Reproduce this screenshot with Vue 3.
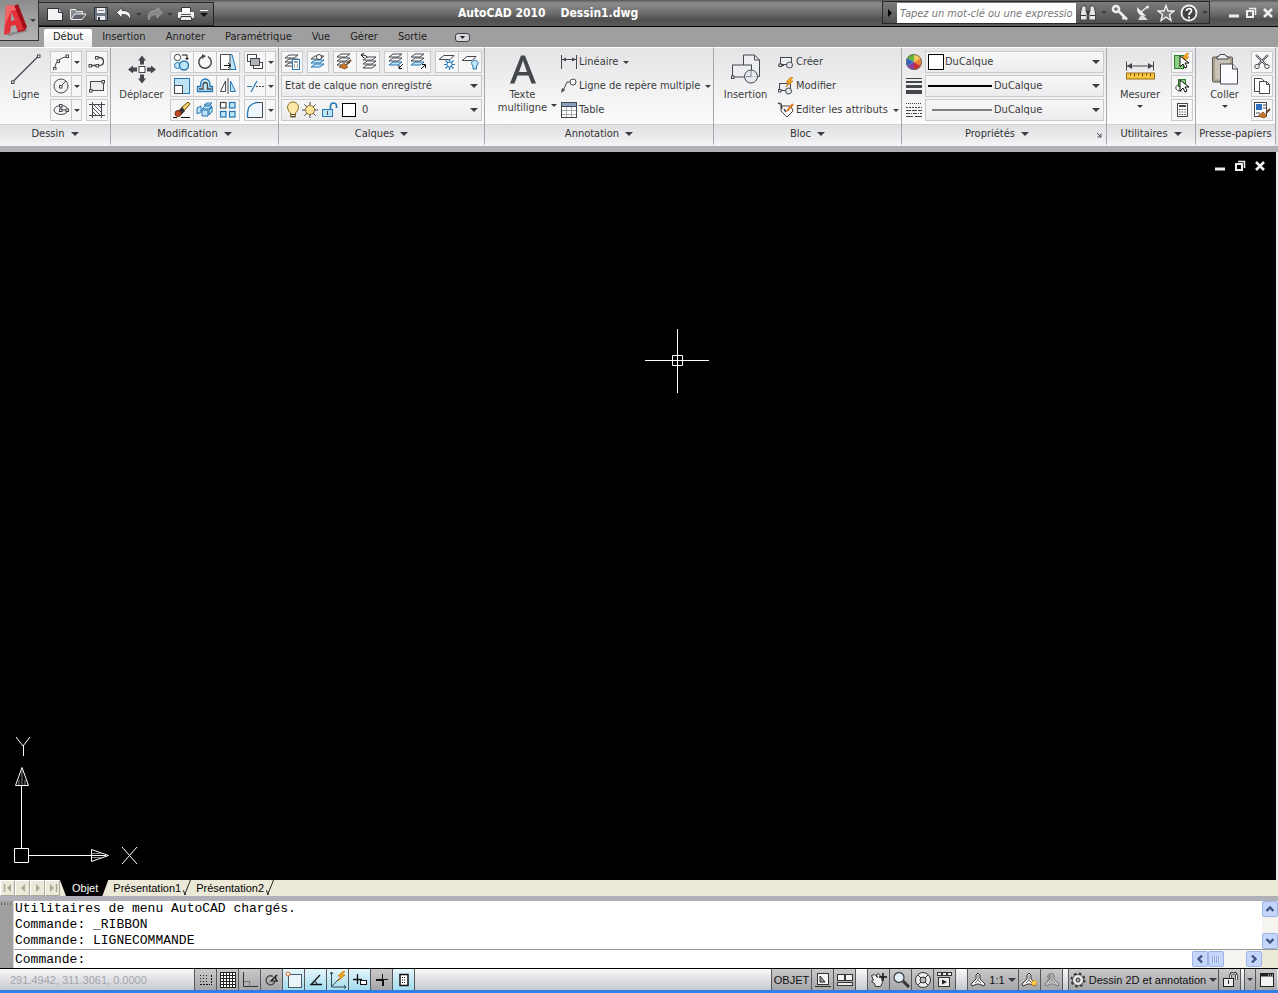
<script setup>
import { h, ref } from 'vue'

const D = '#44474c'
const B = '#2577b5'
const L = '#bfe4f6'
const node = (x, y) => `<rect x="${x - 1}" y="${y - 1}" width="2.500" height="2.500" fill="#fff" stroke="${D}"/>`
const sheet = (x, y, c = D, f = '#fff') => `<path d="M${x} ${y}h9l-4 3h-9z" fill="${f}" stroke="${c}"/>`
const stack = (x, y, c = D, f = '#fff') => sheet(x, y + 8, c, f) + sheet(x, y + 4, c, f) + sheet(x, y, D)
const brush = '<path d="M15 7l-4 4" stroke="#6b4a2a" stroke-width="2"/><path d="M8 10l4 4-3 2-6-2z" fill="#c8772a" stroke="#7b4312" stroke-width=".7"/>'
const bolt = '<path d="M14 0l-5 5h3l-3 5 7-6h-3l3-4z" fill="#ffb31a" stroke="#c96a00" stroke-width=".7"/>'
const cursor = '<path d="M7 3v11l3-3 2 4 2-1-2-4h4z" fill="#fff" stroke="#111"/>'
const figure = (c, f) => `<path d="M8 1l2 2v4l5 5-1 2-5-2H7l-5 2-1-2 5-5V3z" fill="${f}" stroke="${c}"/><path d="M8 3v5M8 8l-3 3M8 8l3 3" stroke="${c}" stroke-width=".7"/>`

// Each entry: width, height, markup
const icons = {
  line: [32, 32, `<path d="M3 28L28 3" stroke="${D}" stroke-width="1.3"/>${node(2.5, 28.5)}${node(28.5, 2.5)}`],
  move: [30, 30, `<g fill="${D}"><path d="M15 1l4 5h-2v4h-4V6h-2zM15 29l4-5h-2v-4h-4v4h-2zM1 15l5-4v2h4v4H6v2zM29 15l-5-4v2h-4v4h4v2z"/></g><rect x="12" y="12" width="6" height="6" fill="#fff" stroke="${D}"/>`],
  arc: [16, 16, `<path d="M1.5 14.5Q3 4 14.5 2.5" fill="none" stroke="${D}"/>${node(1.5, 14.5)}${node(5, 7)}${node(14, 2)}`],
  polyline: [18, 16, `<path d="M8 3.500h3c6 0 6 8 0 8H2" fill="none" stroke="${D}" stroke-width="1.3"/>${node(8.5, 3.5)}${node(9, 11.5)}${node(2, 11.5)}`],
  circle: [16, 16, `<circle cx="8" cy="8" r="7" fill="#f4f4f4" stroke="${D}"/><path d="M8 8l5-5" stroke="${D}"/>${node(7.5, 8.5)}`],
  rect: [18, 16, `<rect x="2.5" y="3.5" width="13" height="9" fill="#eee" stroke="${D}"/>${node(2.5, 12.5)}${node(15, 3.5)}`],
  ellipse: [16, 16, `<ellipse cx="8" cy="8" rx="7" ry="4.5" fill="#f4f4f4" stroke="${D}"/><path d="M8 4v4h6" fill="none" stroke="${D}"/>${node(7.5, 8)}${node(14, 8)}${node(7.5, 3.5)}`],
  hatch: [16, 16, `<path d="M3.5 0v16M12.5 0v16M0 2.5h16M0 13.5h16" stroke="${D}"/><path d="M4 10l3 3M4 6l7 7M5 3l7 7M9 3l3 3" stroke="${D}" stroke-width=".9"/>`],
  copy: [18, 18, `<circle cx="4.5" cy="4.5" r="3.2" fill="#fff" stroke="${D}"/><circle cx="4.5" cy="12.5" r="3" fill="${L}" stroke="${B}"/><circle cx="11" cy="12.5" r="4.5" fill="${L}" stroke="${B}" stroke-width="1.4"/><path d="M9 2h5v3" fill="none" stroke="#111"/><path d="M12 5h4l-2 2z" fill="#111"/>`],
  rotate: [16, 16, `<path d="M6 2.2A6.2 6.2 0 1 0 11 2.6" fill="none" stroke="${D}" stroke-width="1.5"/><path d="M5 0v5l4-3z" fill="${D}"/>`],
  stretch: [18, 18, `<path d="M9 1.500h4l4 15H9z" fill="${L}" stroke="${B}"/><path d="M11 1.500H1.500v15H11z" fill="#fff" stroke="${D}"/><path d="M5 12.500h6M9 10l3 2.500L9 15" fill="none" stroke="#111"/>`],
  scale: [18, 18, `<rect x="1.500" y="1.500" width="15" height="15" fill="${L}" stroke="${B}"/><rect x="1.500" y="8.500" width="8" height="8" fill="#fff" stroke="${D}"/>`],
  offset: [18, 18, `<path d="M2 14.500h14.500v-5h-2.500V8C14 0 4.500 0 4.500 8v1.500H1.500v5z" fill="${L}" stroke="${B}" stroke-width="1.300"/><path d="M3 12h4V8.500c0-4 4.500-4 4.500 0V12h4" fill="none" stroke="${D}" stroke-width="1.300"/>`],
  mirror: [18, 16, `<path d="M6.500 3v10.500h-5z" fill="#fff" stroke="${D}"/><path d="M11.500 3v10.500h5z" fill="${L}" stroke="${B}"/><path d="M9 0v16" stroke="${D}"/>`],
  erase: [18, 18, `<path d="M9 6l6-5 2 2-6 7z" fill="#f2cf70" stroke="#6b4a13"/><path d="M5 10l4-4 3 4-4 4z" fill="#333"/><circle cx="5" cy="12.500" r="3" fill="#bf4b25" stroke="#732a12"/><path d="M0 16.500h4M8 16.500h9" stroke="#111"/>`],
  explode: [18, 18, `<path d="M1 7l4-2v6l-4 2zM6 9h6v6H6zM6 8l3-3h7l-3 3zM13 9l3-3v5l-3 3zM8 4l3-2h5l-2 2z" fill="${L}" stroke="${B}"/>`],
  array: [18, 18, `<g fill="${L}" stroke="${B}" stroke-width="1.200"><rect x="10.500" y="1.500" width="5.500" height="5.500"/><rect x="1.500" y="10.500" width="5.500" height="5.500"/><rect x="10.500" y="10.500" width="5.500" height="5.500"/></g><rect x="1.500" y="1.500" width="5.500" height="5.500" fill="#fff" stroke="${D}" stroke-width="1.200"/>`],
  order: [18, 18, `<g fill="#fff" stroke="${D}"><rect x="1.500" y="1.500" width="9" height="7"/><rect x="7.500" y="9.500" width="9" height="6"/><rect x="4.500" y="5.500" width="9" height="7" fill="#aeb1b5"/></g>`],
  trim: [18, 16, `<path d="M1 8.500h5" stroke="${B}"/><path d="M5 14l6-11" stroke="${B}" stroke-width="1.200"/><path d="M10 8.500h8" stroke="${D}" stroke-dasharray="2 1"/>`],
  fillet: [18, 18, `<path d="M2 16V12Q3 3 11 2h5v14z" fill="#eef6fb"/><path d="M2 16.500h14.500V1.500H11" fill="none" stroke="${D}"/><path d="M1.500 17V12Q2 3 11 1.500" fill="none" stroke="${B}" stroke-width="1.300"/>`],
  layerProps: [18, 18, `${stack(6, 2)}<rect x="9.500" y="6.500" width="7" height="10" fill="#fff" stroke="${B}"/><path d="M11 9h4M11 12h1M14 12h1M11 14h1M14 14h1" stroke="${D}"/>`],
  layerMake: [18, 18, `${stack(6, 3, B, L)}<circle cx="10" cy="4" r="2.500" fill="#fff" stroke="${D}"/>`],
  layerMatch: [18, 18, stack(5, 1) + brush],
  layerPrev: [18, 18, `${stack(8, 4)}<path d="M8 4.500Q8 2 2 2M5 0L2 2l3 3" fill="none" stroke="#111"/>`],
  layerIso: [18, 18, `${sheet(6, 9, B, L)}${sheet(6, 5)}${sheet(6, 1)}<path d="M16 11l-4 4M12 12v3.500h3" fill="none" stroke="#111"/>`],
  layerUniso: [18, 18, `${sheet(5, 9, B, L)}${sheet(5, 5)}${sheet(5, 1)}<path d="M11 16l4-4M12 11.500h3.500V15" fill="none" stroke="#111"/>`],
  layerFreeze: [18, 18, `<path d="M6 2.500h10l-4 4H1z" fill="#fff" stroke="${D}"/><path d="M11.500 6v11M6 11.500h11M7.500 7.500l8 8M15.500 7.500l-8 8" stroke="${B}" stroke-width="1.200"/><circle cx="11.500" cy="11.500" r="2.500" fill="#fff" stroke="${B}"/>`],
  layerOff: [18, 18, `<path d="M6 3.500h9l-4 4H1z" fill="#fff" stroke="${D}"/><path d="M12 13c-5-5 5-9 5-2 0 1-1 1-1.500 2v3H12z" fill="${L}" stroke="${B}"/>`],
  bulb: [12, 18, `<path d="M3.500 12C-2 7 1 1 6 1s8 6 2.500 11v4h-5z" fill="#ffe9a8" stroke="#8b6c20"/><path d="M4 13.500h4M4 15.500h4" stroke="${D}"/>`],
  sun: [16, 16, `<path d="M8 0v16M0 8h16M2.300 2.300l11.400 11.400M13.700 2.300L2.300 13.700" stroke="${D}"/><circle cx="8" cy="8" r="4.500" fill="#ffe49a" stroke="#94722b"/>`],
  lock: [18, 16, `<path d="M9.500 8V4q0-3 3-3t3 3v2" fill="none" stroke="${B}" stroke-width="1.600"/><rect x="1.500" y="7.500" width="10" height="7" fill="${L}" stroke="${B}"/><path d="M6.500 9v4" stroke="${D}"/>`],
  letterA: [30, 30, `<path d="M2 29L13 1h4l11 28h-4.500l-3-8h-11l-3 8zM11 17.500h8L15 6z" fill="${D}" fill-rule="evenodd"/>`],
  dim: [18, 18, `<path d="M1.500 2v14M16.500 2v14M2 6.500h14" fill="none" stroke="${D}"/><path d="M2 6.500l4-2v4zM16 6.500l-4-2v4z" fill="${D}"/>`],
  leader: [18, 18, `<path d="M3 14L7 5h3" fill="none" stroke="${D}"/><path d="M1 16l1-5 3 2z" fill="${D}"/><circle cx="13" cy="5" r="3" fill="#fff" stroke="${D}"/>`],
  table: [18, 18, `<rect x="1.500" y="1.500" width="15" height="15" fill="#fff" stroke="${D}"/><path d="M2 2h14v3H2z" fill="#8aa0c0"/><path d="M2 5.500h14" stroke="${D}"/><path d="M2 9.500h14M2 13.500h14M6.500 6v10M11.500 6v10" stroke="#a7aaae"/>`],
  insert: [32, 32, `<path d="M13.500 13V1.500h11l5 5V23h-16z" fill="#eceef4" stroke="${D}"/><path d="M24.500 1.500v5h5" fill="none" stroke="${D}"/><rect x="2.500" y="11.500" width="19" height="12" fill="#eceef4" stroke="${D}"/>${node(2.5, 23.5)}<circle cx="21" cy="23" r="6.500" fill="#e5e8ef" fill-opacity=".85" stroke="${D}"/><path d="M21 17v6h-5" fill="none" stroke="#8c9098"/>`],
  blockCreate: [18, 18, `<rect x="3.500" y="4.500" width="11" height="7" fill="#eceef4" stroke="${D}"/><path d="M1 12.500h6" stroke="${D}"/>${node(3, 12)}<circle cx="12.500" cy="12" r="3" fill="#e5e8ef" stroke="${D}"/>`],
  blockEdit: [18, 18, `<rect x="2.500" y="6.500" width="11" height="7" fill="#eceef4" stroke="${D}"/>${node(2.5, 13.5)}<circle cx="11.500" cy="14" r="3" fill="#e5e8ef" stroke="${D}"/>${bolt}`],
  attrEdit: [18, 18, `<path d="M4 5h10l2 5-6 6-6-6z" fill="#fff" stroke="${D}"/><path d="M1 2l3 1 1 5" fill="none" stroke="${D}" stroke-width="1.500"/><path d="M7 8l2 3" stroke="${D}" stroke-width="1.500"/><path d="M10 10l6-7" stroke="#e27d22" stroke-width="2.200"/>`],
  wheel: [16, 16, '<path d="M8 8V0a8 8 0 0 1 7 4z" fill="#f4c860"/><path d="M8 8l7-4a8 8 0 0 1 0 8z" fill="#ee8330"/><path d="M8 8l7 4a8 8 0 0 1-7 4z" fill="#cc2e35"/><path d="M8 8v8a8 8 0 0 1-7-4z" fill="#8b3ea0"/><path d="M8 8l-7 4a8 8 0 0 1 0-8z" fill="#2f62c4"/><path d="M8 8L1 4a8 8 0 0 1 7-4z" fill="#62b63c"/><circle cx="8" cy="8" r="7.500" fill="none" stroke="#6b6e73"/>'],
  weights: [16, 18, `<path d="M0 1.500h16" stroke="${D}"/><path d="M0 5h16" stroke="${D}" stroke-width="2"/><path d="M0 9.500h16" stroke="${D}" stroke-width="3"/><path d="M0 15h16" stroke="${D}" stroke-width="4"/>`],
  linetypes: [16, 16, `<g stroke="${D}"><path d="M0 1.500h16" stroke-dasharray="1 1"/><path d="M0 5.500h16" stroke-dasharray="2 1"/><path d="M0 8.500h16" stroke-dasharray="5 1"/><path d="M0 11.500h16" stroke-dasharray="4 1 1 1"/><path d="M0 14.500h16" stroke-dasharray="7 2"/></g>`],
  measure: [32, 32, `<path d="M2.500 8v9M29.500 8v9M3 12.500h26" stroke="${D}"/><path d="M3 12.500l5-3v6zM29 12.500l-5-3v6z" fill="${D}"/><rect x="2.500" y="19.500" width="28" height="6" fill="#f8c63f" stroke="#9b6d10"/><path d="M6.500 20v2M10.500 20v3M14.500 20v2M18.500 20v3M22.500 20v2M26.500 20v3" stroke="#6d4c08"/>`],
  quickSelect: [18, 18, `<rect x="1.500" y="2.500" width="9" height="13" fill="#8fd183" stroke="#2c7a2c"/>${bolt}${cursor}`],
  selectAll: [18, 18, `<path d="M8 7C2 7 1 13 6 14h3" fill="none" stroke="${D}"/><rect x="5.500" y="2.500" width="7" height="7" fill="#8fd183" stroke="#2c7a2c"/>${cursor}`],
  calc: [18, 18, `<rect x="4.500" y="2.500" width="10" height="13" fill="#fff" stroke="${D}"/><rect x="6" y="4" width="7" height="2" fill="${D}"/><path d="M6 8.500h7M6 11h7M6 13.500h7" stroke="${D}" stroke-dasharray="1.500 1.200"/>`],
  paste: [32, 32, `<rect x="3.500" y="3.500" width="20" height="25" rx="1" fill="#aa9f90" stroke="#5f584e"/><rect x="6" y="6" width="15" height="20" fill="#c9c2b6"/><path d="M8 5.500V3q3 0 3-2h5q0 2 3 2v2.500z" fill="#eceef1" stroke="${D}"/><path d="M11.500 10.500h12l5 5v15h-17z" fill="#fafbfe" stroke="${D}"/><path d="M23.500 10.500v5h5" fill="#dfe2ea" stroke="${D}"/>`],
  cut: [18, 18, `<path d="M3 2l10 10M15 2L5 12" stroke="${D}" stroke-width="2"/><path d="M3 2l10 10M15 2L5 12" stroke="#fff" stroke-width=".6"/><ellipse cx="4" cy="13.500" rx="2.300" ry="2" fill="#fff" stroke="${D}"/><ellipse cx="14" cy="13.500" rx="2.300" ry="2" fill="#fff" stroke="${D}"/>`],
  copyClip: [18, 18, `<path d="M1.500 1.500h7l3 3v10h-10z" fill="#fff" stroke="${D}"/><path d="M6.500 4.500h7l3 3v9h-10z" fill="#fff" stroke="${D}"/><path d="M13.500 4.500v3h3" fill="none" stroke="${D}"/>`],
  matchProps: [18, 18, `<rect x="1.500" y="1.500" width="12" height="14" fill="#fff" stroke="${D}"/><rect x="3" y="3" width="6" height="6" fill="#2a6fbd"/><path d="M10 4h3M10 7h3M3 12h4" stroke="${D}"/><g transform="translate(2 1)">${brush}</g>`],
  launcher: [6, 6, `<path d="M1 1l4 4M5 1.500V5H1.500" fill="none" stroke="${D}"/>`],
  newFile: [18, 16, '<path d="M1.500 2.500h11l4 4v8h-15z" fill="#f4f4f4" stroke="#2e3238"/><path d="M12.500 2.500v4h4" fill="#b9bcc1" stroke="#2e3238"/>'],
  open: [18, 16, '<path d="M1.500 13V3.500h5l1 2h6v3" fill="#8a8e94" stroke="#ececec"/><path d="M2 13.500l4-5.500h11l-4 5.500z" fill="#5f646c" stroke="#eee"/>'],
  save: [16, 16, '<path d="M1.500 1.500h13v13h-13z" fill="#6f7886" stroke="#2b3038"/><rect x="4" y="2" width="8" height="5" fill="#f1f1f1"/><path d="M5 4.500h6" stroke="#888"/><rect x="4" y="10" width="8" height="4" fill="#eceff3"/><rect x="5" y="11" width="2" height="3" fill="#333"/>'],
  undo: [18, 16, '<path d="M1.500 6.500L7 1.500v3c7 0 10 3 8 9.500-1-4-3-5.500-8-5.500v3.500z" fill="#f5f5f5" stroke="#33363b" stroke-width=".800"/>'],
  redo: [18, 16, '<path d="M16.500 6.500L11 1.500v3c-7 0-10 3-8 9.500 1-4 3-5.500 8-5.500v3.500z" fill="#868686" stroke="#aaa" stroke-width=".800"/>'],
  print: [18, 16, '<path d="M4.500 1.500h9v5h-9z" fill="#fff" stroke="#333"/><rect x="1" y="6" width="16" height="6" rx="1" fill="#f3f3f3"/><path d="M4 8.500h10" stroke="#555"/><path d="M4 10.500h10l1 4H3z" fill="#eee" stroke="#333"/>'],
  qatMore: [8, 8, '<path d="M0 .5h8" stroke="#fff"/><path d="M0 3h8L4 7z" fill="#111"/>'],
  find: [18, 16, '<g fill="#e6e6e6" stroke="#2d2d2d" stroke-width=".800"><path d="M3 1h4v5l1 2v7H1.500V8zM15 1h-4v5l-1 2v7h6.500V8z"/></g><path d="M8 6h2v3H8zM2 10h5v1H2zM11 10h5v1h-5z" fill="#333"/>'],
  key: [18, 18, '<circle cx="5" cy="5" r="3" fill="none" stroke="#ededed" stroke-width="2.600"/><path d="M7.500 7l8.500 8.500M13.500 13l-2 2" stroke="#ededed" stroke-width="2.600"/>'],
  dish: [18, 18, '<path d="M3 3q-1 9 9 9z" fill="#f2f2f2"/><path d="M7 8l6-5" stroke="#eee" stroke-width="1.500"/><circle cx="13.500" cy="3" r="1.500" fill="#eee"/><path d="M7 11l-3 5h10l-4-4z" fill="#ddd"/>'],
  star: [18, 18, '<path d="M9 1.500l2 5.500h6l-4.500 3.500 1.500 6L9 13l-5 3.500 1.500-6L1 7h6z" fill="#777" stroke="#f4f4f4" stroke-width="1.300"/>'],
  help: [18, 18, '<circle cx="9" cy="9" r="7.500" fill="#444" stroke="#f2f2f2" stroke-width="1.800"/><path d="M6.500 7c0-3.500 5.500-3 5 0-.3 1.500-2.500 1.700-2.500 4M9 12.500v2" fill="none" stroke="#fff" stroke-width="1.800"/>'],
  min: [12, 12, '<path d="M1 9h10" stroke="#eee" stroke-width="3"/>'],
  restore: [12, 12, '<path d="M4 1.500h6.500V8" fill="none" stroke="#eee" stroke-width="1.500"/><rect x="2" y="4" width="6" height="6" fill="none" stroke="#eee" stroke-width="2"/>'],
  close: [12, 12, '<path d="M2 2l8 8M10 2l-8 8" stroke="#eee" stroke-width="2.600"/>'],
  more: [16, 9, '<rect x=".5" y=".5" width="14" height="8" rx="2.500" fill="#d5d7dc" stroke="#3c4044"/><path d="M5 3h5L7.500 6z" fill="#222"/>'],
  first: [12, 12, '<path d="M2.500 2v8" stroke="#aca899" stroke-width="1.500"/><path d="M9 2L5 6l4 4z" fill="#aca899"/>'],
  prev: [12, 12, '<path d="M8 2L4 6l4 4z" fill="#aca899"/>'],
  next: [12, 12, '<path d="M4 2l4 4-4 4z" fill="#aca899"/>'],
  last: [12, 12, '<path d="M9.500 2v8" stroke="#aca899" stroke-width="1.500"/><path d="M3 2l4 4-4 4z" fill="#aca899"/>'],
  snap: [16, 16, '<g stroke="#222" stroke-dasharray="1 2"><path d="M2 3.500h9M2 6.500h9M2 9.500h9"/></g><path d="M2 12.500h10M13.500 3v10" stroke="#111" stroke-dasharray="2 1"/>'],
  grid: [16, 16, '<rect width="16" height="16" fill="#fff"/><path d="M.5 0v16M3.500 0v16M6.500 0v16M9.500 0v16M12.500 0v16M15.500 0v16M0 .5h16M0 3.500h16M0 6.500h16M0 9.500h16M0 12.500h16M0 15.500h16" stroke="#222"/>'],
  ortho: [16, 16, '<path d="M1.500 0v14.500H16" fill="none" stroke="#333"/><path d="M2 9.500h5.500v5" fill="none" stroke="#777"/>'],
  polar: [16, 16, '<path d="M9 4.500A4.500 4.500 0 1 0 11 9" fill="none" stroke="#444" stroke-width="1.300"/><path d="M13 3L7 9h7M11 4.500l2 5" fill="none" stroke="#111" stroke-width="1.200"/>'],
  osnap: [18, 18, '<rect x="3.500" y="3.500" width="13" height="13" fill="#e9f5fb" stroke="#4b5a64"/><circle cx="3" cy="3" r="2" fill="#fff" stroke="#e36224"/>'],
  track: [16, 16, '<path d="M12 3L3 12.500h11" fill="none" stroke="#111" stroke-width="1.300"/><path d="M6 9.500q3 0 3 3" stroke="#111" fill="none"/>'],
  ducs: [18, 18, `<path d="M2.500 1v15H17M3 15L12 6M1 3l1.500-2L4 3M15 14l2 2-2 1.500" fill="none" stroke="#33484f"/>${bolt}`],
  dyn: [16, 16, '<path d="M5.500 2v10M1 7.500h9" stroke="#111" stroke-width="1.300"/><rect x="8.500" y="8.500" width="6" height="4" fill="#fff" stroke="#111"/>'],
  lwt: [16, 16, '<path d="M8.500 2v12M8 7.500h6" stroke="#111"/><path d="M2 8h7v6" fill="none" stroke="#111" stroke-width="2"/>'],
  quickProps: [14, 14, '<rect x="3" y="1.500" width="8" height="11" fill="#fff" stroke="#111" stroke-width="1.500"/><path d="M5 4.500h4M5 7h4M5 9.500h4" stroke="#111" stroke-dasharray="1 1"/>'],
  model: [18, 18, '<rect x="3.500" y="2.500" width="11" height="11" fill="#f5f5f5" stroke="#333"/><path d="M6 5v6h5z" fill="#aaa" stroke="#222"/><path d="M1 15.500h16" stroke="#333"/>'],
  views: [18, 18, '<rect x="1.500" y="3.500" width="7" height="6" fill="#f5f5f5" stroke="#333"/><rect x="9.500" y="3.500" width="7" height="6" fill="#f5f5f5" stroke="#333"/><rect x="1.500" y="11.500" width="15" height="3" fill="#eee" stroke="#333"/>'],
  pan: [18, 18, '<path d="M1.500 4.500l3-1 3 3-1-3 2-1 3 4 1 5-2 4H5.500l-1-3-3-2 2-1z" fill="#eee" stroke="#333"/><path d="M13 2v8M9 6h8" stroke="#111" stroke-width="1.500"/>'],
  zoom: [18, 18, '<path d="M11 10l6 6" stroke="#333" stroke-width="3"/><circle cx="7" cy="6.500" r="5" fill="#dff0f7" stroke="#444" stroke-width="1.300"/>'],
  steer: [18, 18, '<circle cx="9" cy="9" r="7.500" fill="#eee" stroke="#333"/><circle cx="9" cy="9" r="3" fill="#bbb" stroke="#333"/><path d="M4 4l3 3M14 4l-3 3M4 14l3-3M14 14l-3-3" stroke="#333"/>'],
  motion: [18, 18, '<g fill="#eee" stroke="#333"><rect x="1.500" y="1.500" width="4" height="3"/><rect x="6.500" y="1.500" width="4" height="3"/><rect x="11.500" y="1.500" width="4" height="3"/><rect x="2.500" y="6.500" width="11" height="9"/></g><path d="M6 8.500l5 2.500-5 2.500z" fill="#222"/>'],
  scaleFig: [16, 16, figure('#333', '#f1f1f1')],
  scaleVis: [18, 16, figure('#333', '#f1f1f1') + '<circle cx="13" cy="11" r="2.500" fill="#ffca4a" stroke="#e07f13" stroke-dasharray="1 1"/>'],
  scaleAuto: [16, 16, figure('#777', '#c4c4c4') + '<path d="M6 1L3 5h3L3 9" fill="none" stroke="#777"/>'],
  gear: [16, 16, '<circle cx="8" cy="8" r="6.500" fill="none" stroke="#333" stroke-width="2" stroke-dasharray="2.600 2.500"/><circle cx="8" cy="8" r="5.500" fill="#e9e9e9" stroke="#333" stroke-width=".800"/><circle cx="8" cy="8" r="2" fill="#aaa" stroke="#333"/>'],
  unlock: [18, 16, '<path d="M9.500 8V4q0-3 3-3t3 3v4" fill="none" stroke="#222" stroke-width="2.400"/><path d="M9.500 8V4q0-3 3-3t3 3v4" fill="none" stroke="#eee"/><rect x="2.500" y="6.500" width="10" height="8" fill="#eee" stroke="#222"/><path d="M7.500 8v4" stroke="#222"/>'],
  clean: [16, 16, '<rect x="1.500" y="1.500" width="13" height="13" fill="#f2f2f2" stroke="#222"/><path d="M1 3h14" stroke="#222" stroke-width="3"/><path d="M9 3h5" stroke="#fff" stroke-dasharray="1 1"/>'],
  up: [12, 12, '<path d="M2.500 8L6 4.500 9.500 8" fill="none" stroke="#3c5585" stroke-width="2.400"/>'],
  down: [12, 12, '<path d="M2.500 4L6 7.500 9.500 4" fill="none" stroke="#3c5585" stroke-width="2.400"/>'],
  left: [12, 12, '<path d="M8 2.500L4.500 6 8 9.500" fill="none" stroke="#3c5585" stroke-width="2.400"/>'],
  right: [12, 12, '<path d="M4 2.500L7.500 6 4 9.500" fill="none" stroke="#3c5585" stroke-width="2.400"/>'],
}

const Icon = (props) => {
  const [w, ht, markup] = icons[props.name]
  return h('svg', { width: w, height: ht, viewBox: `0 0 ${w} ${ht}`, 'aria-hidden': 'true', innerHTML: markup })
}
Icon.props = ['name']

const menus = ['Début', 'Insertion', 'Annoter', 'Paramétrique', 'Vue', 'Gérer', 'Sortie']
const activeMenu = ref('Début')
const sheets = ['Objet', 'Présentation1', 'Présentation2']
const activeSheet = ref('Objet')
const log = ['Utilitaires de menu AutoCAD chargés.', 'Commande: _RIBBON', 'Commande: LIGNECOMMANDE']
const command = ref('')

const drawSplit = [['arc', 'Arc', 'polyline', 'Polyligne'], ['circle', 'Cercle', 'rect', 'Rectangle'], ['ellipse', 'Ellipse', 'hatch', 'Hachures']]
const modify = [
  ['copy', 'rotate', 'stretch', 'order'],
  ['scale', 'offset', 'mirror', 'trim'],
  ['erase', 'explode', 'array', 'fillet'],
]
const layerGroups = [['layerProps'], ['layerMake'], ['layerMatch', 'layerPrev'], ['layerIso', 'layerUniso'], ['layerFreeze', 'layerOff']]
const annotate = [['dim', 'Linéaire', true], ['leader', 'Ligne de repère multiple', true], ['table', 'Table', false]]
const block = [['blockCreate', 'Créer', false], ['blockEdit', 'Modifier', false], ['attrEdit', 'Editer les attributs', true]]
const toggles = [['snap', 0], ['grid', 0], ['ortho', 0], ['polar', 0], ['osnap', 1], ['track', 1], ['ducs', 1], ['dyn', 1], ['lwt', 0], ['quickProps', 1]]
</script>

<template>
  <div class="app">
    <header class="head">
      <button class="app-button" aria-label="Menu de l'application">
        <svg width="26" height="34" viewBox="0 0 26 34" aria-hidden="true">
          <path d="M4 31l20-5 2 2-19 5z" fill="#666" opacity=".5" />
          <path d="M12 3l4-2 9 23-3 4-6 1-2-6z" fill="#a30e17" />
          <path d="M4 3l8-1 10 25-6 1-2-6-5 1-1 7-6 2z M9 9v9l4-1z" fill="#e2313a" fill-rule="evenodd" />
          <path d="M4 3l8-1 2 5-5 1-6 14z" fill="#ff8a85" opacity=".6" />
        </svg>
        <span class="caret"></span>
      </button>
      <div class="titlebar">
        <div class="qat">
          <button aria-label="Nouveau"><Icon name="newFile" /></button>
          <button aria-label="Ouvrir"><Icon name="open" /></button>
          <button aria-label="Enregistrer"><Icon name="save" /></button>
          <button aria-label="Annuler"><Icon name="undo" /></button>
          <button class="thin" aria-label="Liste d'annulation"><span class="caret small"></span></button>
          <button aria-label="Rétablir"><Icon name="redo" /></button>
          <button class="thin" aria-label="Liste de rétablissement"><span class="caret small"></span></button>
          <button aria-label="Imprimer"><Icon name="print" /></button>
          <button class="more-tools" aria-label="Personnaliser"><Icon name="qatMore" /></button>
        </div>
        <h1 class="title"><span>AutoCAD 2010</span><span>Dessin1.dwg</span></h1>
        <div class="info">
          <button class="fold" aria-label="Réduire la recherche"></button>
          <input type="text" aria-label="Recherche" placeholder="Tapez un mot-clé ou une expressio" />
          <button aria-label="Rechercher"><Icon name="find" /></button>
          <button class="thin" aria-label="Options de recherche"><span class="caret small"></span></button>
          <button aria-label="Abonnement"><Icon name="key" /></button>
          <button aria-label="Communication"><Icon name="dish" /></button>
          <button aria-label="Favoris"><Icon name="star" /></button>
          <button aria-label="Aide"><Icon name="help" /></button>
          <button class="thin" aria-label="Options d'aide"><span class="caret small"></span></button>
        </div>
        <div class="window-buttons">
          <button aria-label="Réduire"><Icon name="min" /></button>
          <button aria-label="Restaurer"><Icon name="restore" /></button>
          <button aria-label="Fermer"><Icon name="close" /></button>
        </div>
      </div>
      <nav class="menus">
        <button v-for="m in menus" :key="m" :class="{ active: m === activeMenu }" @click="activeMenu = m">{{ m }}</button>
        <button class="ribbon-toggle" aria-label="Réduire le ruban"><Icon name="more" /></button>
      </nav>
    </header>

    <main class="ribbon">
      <section class="panel">
        <div class="body">
          <button class="big"><Icon name="line" /><span>Ligne</span></button>
          <div class="rows">
            <div v-for="r in drawSplit" :key="r[0]" class="row">
              <div class="group">
                <button :aria-label="r[1]"><Icon :name="r[0]" /></button>
                <button class="drop" :aria-label="'Options ' + r[1]"><span class="caret small"></span></button>
              </div>
              <div class="group"><button :aria-label="r[3]"><Icon :name="r[2]" /></button></div>
            </div>
          </div>
        </div>
        <button class="panel-title">Dessin<span class="caret"></span></button>
      </section>

      <section class="panel">
        <div class="body">
          <button class="big"><Icon name="move" /><span>Déplacer</span></button>
          <div class="rows">
            <div v-for="r in modify" :key="r[0]" class="row">
              <div class="group multi">
                <button v-for="n in r.slice(0, 3)" :key="n" :aria-label="n"><Icon :name="n" /></button>
              </div>
              <div class="group">
                <button :aria-label="r[3]"><Icon :name="r[3]" /></button>
                <button class="drop" :aria-label="'Options ' + r[3]"><span class="caret small"></span></button>
              </div>
            </div>
          </div>
        </div>
        <button class="panel-title">Modification<span class="caret"></span></button>
      </section>

      <section class="panel">
        <div class="body">
          <div class="rows wide">
            <div class="row spread">
              <div v-for="(g, i) in layerGroups" :key="i" class="group" :class="{ multi: g.length > 1 }">
                <button v-for="n in g" :key="n" :aria-label="n"><Icon :name="n" /></button>
              </div>
            </div>
            <div class="combo">
              <select aria-label="Etat de calque"><option>Etat de calque non enregistré</option></select>
              <span class="caret"></span>
            </div>
            <div class="combo layer">
              <div class="lead"><Icon name="bulb" /><Icon name="sun" /><Icon name="lock" /><i class="swatch"></i></div>
              <select aria-label="Calque"><option>0</option></select>
              <span class="caret"></span>
            </div>
          </div>
        </div>
        <button class="panel-title">Calques<span class="caret"></span></button>
      </section>

      <section class="panel">
        <div class="body">
          <button class="big text">
            <Icon name="letterA" /><span>Texte</span>
            <span>multiligne<span class="caret small"></span></span>
          </button>
          <div class="rows">
            <button v-for="a in annotate" :key="a[0]" class="item">
              <Icon :name="a[0]" />{{ a[1] }}<span v-if="a[2]" class="caret small"></span>
            </button>
          </div>
        </div>
        <button class="panel-title">Annotation<span class="caret"></span></button>
      </section>

      <section class="panel">
        <div class="body">
          <button class="big block"><Icon name="insert" /><span>Insertion</span></button>
          <div class="rows">
            <button v-for="a in block" :key="a[0]" class="item">
              <Icon :name="a[0]" />{{ a[1] }}<span v-if="a[2]" class="caret small"></span>
            </button>
          </div>
        </div>
        <button class="panel-title">Bloc<span class="caret"></span></button>
      </section>

      <section class="panel">
        <div class="body">
          <div class="rows wide">
            <div class="property">
              <Icon name="wheel" />
              <div class="combo color">
                <div class="lead"><i class="swatch"></i></div>
                <select aria-label="Couleur"><option>DuCalque</option></select>
                <span class="caret"></span>
              </div>
            </div>
            <div class="property">
              <Icon name="weights" />
              <div class="combo stroke">
                <div class="lead"><i class="rule"></i></div>
                <select aria-label="Epaisseur de ligne"><option>DuCalque</option></select>
                <span class="caret"></span>
              </div>
            </div>
            <div class="property">
              <Icon name="linetypes" />
              <div class="combo stroke">
                <div class="lead"><i class="rule gray"></i></div>
                <select aria-label="Type de ligne"><option>DuCalque</option></select>
                <span class="caret"></span>
              </div>
            </div>
          </div>
        </div>
        <div class="title-row">
          <button class="panel-title">Propriétés<span class="caret"></span></button>
          <button class="launch" aria-label="Palette Propriétés"><Icon name="launcher" /></button>
        </div>
      </section>

      <section class="panel">
        <div class="body">
          <button class="big"><Icon name="measure" /><span>Mesurer</span><span class="caret small"></span></button>
          <div class="rows">
            <div v-for="n in ['quickSelect', 'selectAll', 'calc']" :key="n" class="group"><button :aria-label="n"><Icon :name="n" /></button></div>
          </div>
        </div>
        <button class="panel-title">Utilitaires<span class="caret"></span></button>
      </section>

      <section class="panel">
        <div class="body">
          <button class="big"><Icon name="paste" /><span>Coller</span><span class="caret small"></span></button>
          <div class="rows">
            <div v-for="n in ['cut', 'copyClip', 'matchProps']" :key="n" class="group"><button :aria-label="n"><Icon :name="n" /></button></div>
          </div>
        </div>
        <button class="panel-title">Presse-papiers</button>
      </section>
    </main>

    <section class="drawing" aria-label="Zone de dessin">
      <div class="window-buttons doc">
        <button aria-label="Réduire le dessin"><Icon name="min" /></button>
        <button aria-label="Restaurer le dessin"><Icon name="restore" /></button>
        <button aria-label="Fermer le dessin"><Icon name="close" /></button>
      </div>
      <svg class="crosshair" width="65" height="65" viewBox="0 0 65 65" aria-hidden="true">
        <path d="M32.500 0v64M0 31.500h64M27.500 26.500h10v10h-10z" fill="none" stroke="#fff" />
      </svg>
      <svg class="ucs" width="130" height="130" viewBox="0 0 130 130" fill="none" stroke="#fff" aria-hidden="true">
        <path d="M.5 112.500h14v14h-14zM7.500 112V49M15 119.500h77" />
        <path d="M1.500 49.500h13l-6.500-18zM77.500 113.500v12l17-6z" />
        <path d="M8 34v15M5 44v5M11 44v5M78 117.500h9M78 121.500h9" stroke="#888" />
        <path d="M2 1l7 9 7-9M9.500 10v10M108 111l15 17M123 111l-15 17" />
      </svg>
    </section>

    <nav class="sheets">
      <button v-for="n in ['first', 'prev', 'next', 'last']" :key="n" class="step" :aria-label="n"><Icon :name="n" /></button>
      <button v-for="s in sheets" :key="s" class="sheet" :class="{ active: s === activeSheet }" @click="activeSheet = s">
        {{ s }}
        <svg class="slash" width="8" height="16" viewBox="0 0 8 16" aria-hidden="true"><path d="M7.500 0l-6 15M0 10l2.500 5" fill="none" stroke="#222" /></svg>
      </button>
    </nav>

    <section class="console">
      <div class="grip"></div>
      <div class="log"><div v-for="l in log" :key="l">{{ l }}</div></div>
      <div class="vscroll">
        <button aria-label="Défiler vers le haut"><Icon name="up" /></button>
        <button aria-label="Défiler vers le bas"><Icon name="down" /></button>
      </div>
      <div class="prompt"><label for="cmd">Commande:</label><input id="cmd" v-model="command" type="text" /></div>
      <div class="hscroll">
        <button aria-label="Défiler à gauche"><Icon name="left" /></button>
        <span class="thumb"></span>
        <button class="end" aria-label="Défiler à droite"><Icon name="right" /></button>
      </div>
    </section>

    <footer class="status">
      <span class="coords">291.4942, 311.3061, 0.0000</span>
      <button v-for="t in toggles" :key="t[0]" :class="{ on: t[1] }" :aria-label="t[0]"><Icon :name="t[0]" /></button>
      <span class="fill"></span>
      <button class="space">OBJET</button>
      <button aria-label="Présentation rapide"><Icon name="model" /></button>
      <button aria-label="Dessins rapides"><Icon name="views" /></button>
      <span class="gap"></span>
      <button v-for="n in ['pan', 'zoom', 'steer', 'motion']" :key="n" :aria-label="n"><Icon :name="n" /></button>
      <span class="gap"></span>
      <button class="ratio"><Icon name="scaleFig" />1:1<span class="caret"></span></button>
      <button aria-label="Visibilité des annotations"><Icon name="scaleVis" /></button>
      <button aria-label="Echelle automatique"><Icon name="scaleAuto" /></button>
      <span class="gap narrow"></span>
      <button class="workspace"><Icon name="gear" />Dessin 2D et annotation<span class="caret"></span></button>
      <button aria-label="Verrouillage"><Icon name="unlock" /></button>
      <span class="gap tiny"></span>
      <button class="tray" aria-label="Options"><span class="caret small"></span></button>
      <button aria-label="Plein écran"><Icon name="clean" /></button>
    </footer>
  </div>
</template>

<style>
body {
  margin: 0;
  background: #e9e9eb;
}
</style>

<style scoped>
.app {
  display: flex;
  flex-direction: column;
  min-height: 100vh;
  overflow: hidden;
  font: 11px/14px "DejaVu Sans Condensed", "Noto Sans", sans-serif;
  color: #3a3c40;
}
button, select, input {
  margin: 0;
  padding: 0;
  border: 0;
  border-radius: 0;
  background: none;
  font: inherit;
  color: inherit;
}
button {
  display: flex;
  align-items: center;
  justify-content: center;
}
svg { display: block; flex: none; }
.caret {
  flex: none;
  width: 0;
  height: 0;
  border: 4px solid transparent;
  border-top-color: #3a3c40;
  border-bottom: 0;
}
.caret.small { border-width: 3px; border-bottom: 0; }

.head { position: relative; background: #9f9f9f; }
.app-button {
  position: absolute;
  left: 0;
  top: 0;
  width: 39px;
  height: 41px;
  gap: 2px;
  border: 1px solid #333;
  border-left: 0;
  border-top: 0;
  background: linear-gradient(#8c8c8c, #a2a2a2 50%, #b4b4b4);
}
.app-button .caret { border-width: 3px; border-bottom: 0; }
.titlebar {
  display: flex;
  height: 26px;
  padding-left: 38px;
  border-bottom: 1px solid #000;
  background: linear-gradient(#555, #8c8c8c 3px, #6d6d6d 50%, #505050 75%, #5c5c5c);
}
.qat {
  display: flex;
  box-sizing: border-box;
  width: 176px;
  height: 24px;
  margin-top: 2px;
  padding: 0 2px 0 4px;
  border: 1px solid #262626;
  background: linear-gradient(#7c7c7c, #4b4b4b);
}
.qat button { width: 23px; }
.qat button.thin { width: 8px; }
.qat .more-tools { flex: 1; }
.title {
  display: flex;
  flex: 1;
  justify-content: center;
  gap: 15px;
  margin: 0;
  font-size: 12px;
  line-height: 26px;
  font-weight: bold;
  color: #fff;
}
.info {
  display: flex;
  box-sizing: border-box;
  width: 328px;
  height: 23px;
  margin-top: 1px;
  border: 1px solid #2a2a2a;
  background: linear-gradient(#7c7c7c, #505050);
}
.info button { width: 23px; }
.info button.thin { width: 9px; }
.info .fold { width: 14px; }
.fold::before {
  content: "";
  border: 4px solid transparent;
  border-left-color: #000;
  border-right: 0;
}
.info input {
  width: 179px;
  height: 20px;
  margin: 1px 0;
  padding: 0 3px;
  box-sizing: border-box;
  background: #fff;
  font-style: italic;
}
.info input::placeholder { color: #777; opacity: 1; }
.window-buttons { display: flex; gap: 5px; padding: 0 4px 0 18px; }
.window-buttons button { width: 12px; }
.menus { display: flex; height: 20px; padding-left: 44px; }
.menus button { padding: 0 10px; color: #222; }
.menus button.active {
  height: 18px;
  margin-top: 2px;
  padding: 0 9px 2px;
  background: linear-gradient(#fff, #eee);
  border-radius: 2px 2px 0 0;
}
.menus .ribbon-toggle { padding: 0 18px; }

.ribbon {
  display: grid;
  grid-template-columns: 111fr 168fr 206fr 229fr 188fr 205fr 89fr 80fr;
  padding-right: 2px;
  border-bottom: 6px solid #b0b1b6;
  background: #e9e9eb;
}
.panel {
  display: flex;
  flex-direction: column;
  min-width: 0;
  border-right: 1px solid #a6a7aa;
  border-bottom: 3px solid #f4f4f6;
  border-top: 1px solid #fff;
}
.body {
  display: flex;
  height: 76px;
  padding: 3px 2px 0;
  box-sizing: border-box;
  background: linear-gradient(#e4e4e6, #fcfcfd);
}
.panel-title {
  flex: 1;
  width: 100%;
  height: 19px;
  gap: 6px;
  border-top: 1px solid #d0d1d4;
  background: linear-gradient(#dfe0e2, #f1f1f3);
  color: #333;
}
.title-row {
  display: flex;
  background: linear-gradient(#dfe0e2, #f1f1f3);
}
.launch { width: 14px; border-top: 1px solid #d0d1d4; padding-top: 2px; }
.big {
  flex: 1;
  flex-direction: column;
  justify-content: flex-start;
  min-width: 0;
}
.big svg { height: 37px; }
.big .caret { margin-top: 3px; }
.big.text { flex: none; width: 71px; line-height: 13px; }
.big.text .caret { display: inline-block; margin: 0 -10px 4px 4px; }
.big.block { flex: none; width: 59px; }
.rows { display: flex; flex-direction: column; gap: 2px; }
.rows.wide { flex: 1; min-width: 0; }
.row { display: flex; gap: 4px; }
.row.spread { justify-content: space-between; }
.group {
  display: flex;
  border: 1px solid #c9cacd;
  background: #f7f7f8;
}
.group button { width: 20px; height: 20px; }
.group button + button { border-left: 1px solid #c9cacd; }
.group.multi button { width: 22px; }
.group.multi button + button { width: 23px; }
.group button.drop { width: 10px; }
.combo { position: relative; height: 22px; min-width: 0; }
.combo select {
  width: 100%;
  height: 22px;
  padding-left: 3px;
  border: 1px solid #c9cacd;
  appearance: none;
  background: linear-gradient(#f7f7f8, #ececee);
}
.combo > .caret { position: absolute; right: 4px; top: 9px; pointer-events: none; }
.lead {
  position: absolute;
  left: 3px;
  top: 2px;
  display: flex;
  align-items: center;
  gap: 4px;
  height: 18px;
  pointer-events: none;
}
.layer select { padding-left: 80px; }
.layer .lead { left: 6px; gap: 3px; }
.swatch { width: 12px; height: 12px; border: 1px solid #000; background: #fff; }
.property { display: flex; align-items: center; gap: 3px; padding-left: 2px; }
.property .combo { flex: 1; }
.color .swatch { width: 14px; height: 14px; }
.color select { padding-left: 19px; }
.stroke select { padding-left: 68px; }
.rule { width: 64px; height: 2px; background: #000; }
.rule.gray { width: 60px; margin-left: 4px; background: #808080; }
.item { height: 22px; padding-left: 2px; justify-content: flex-start; gap: 1px; white-space: nowrap; }
.item .caret { margin-left: 4px; }

.drawing { position: relative; flex: 1; min-height: 300px; margin-right: 2px; background: #000; }
.doc { position: absolute; right: 10px; top: 8px; padding: 0; gap: 8px; }
.crosshair { position: absolute; left: 645px; top: 177px; }
.ucs { position: absolute; left: 14px; bottom: 14px; }

.sheets {
  display: flex;
  height: 16px;
  border-bottom: 5px solid #b0b1b6;
  background: #ece9d8;
  font-family: "Liberation Sans", sans-serif;
  color: #000;
}
.step { width: 15px; box-sizing: border-box; border: 1px solid; border-color: #fff #aca899 #aca899 #fff; }
.sheet { padding-left: 5px; gap: 2px; line-height: 15px; }
.sheet.active {
  padding: 0 10px 0 12px;
  background: #000;
  color: #fff;
  clip-path: polygon(0 0, 100% 0, calc(100% - 6px) 100%, 6px 100%);
}
.sheet.active .slash { display: none; }

.console {
  display: grid;
  grid-template-columns: 14px 1fr 70px 16px;
  grid-template-rows: 49px 18px;
  border-bottom: 1px solid #000;
  background: #fff;
  font: 13px/16px "Liberation Mono", monospace;
  color: #000;
}
.grip {
  grid-row: 1 / 3;
  border-right: 1px solid #d5d5d5;
  background: radial-gradient(#666 1px, transparent 1px) 0 2px / 3px 2px repeat-x, #a0a0a0;
}
.log { grid-column: 2 / 4; padding-left: 1px; border-bottom: 1px solid #999; }
.vscroll {
  display: flex;
  flex-direction: column;
  justify-content: space-between;
  border-bottom: 1px solid #999;
  background: #f5f4ee;
}
.vscroll button, .hscroll button, .thumb {
  box-sizing: border-box;
  width: 16px;
  height: 16px;
  border: 1px solid #9db5e6;
  border-radius: 2px;
  background: #c6d6fb;
}
.prompt { display: flex; padding: 2px 0 0 1px; align-items: center; }
.prompt input { flex: 1; min-width: 0; outline: 0; }
.hscroll { grid-column: 3 / 5; display: flex; padding: 1px 16px 1px 0; background: linear-gradient(90deg, #f5f4ee 70px, #ece9d8 70px); }
.hscroll .end { margin-left: auto; }
.thumb { background: repeating-linear-gradient(90deg, #8fa9e8 0 1px, #d5e1fc 1px 2px) center / 8px 7px no-repeat, #c6d6fb; }

.status {
  display: flex;
  height: 21px;
  padding-right: 1px;
  border-bottom: 3px solid #2f7fe6;
  background: linear-gradient(#fafafb, #c7c8d0);
  font-family: "Liberation Sans", sans-serif;
  color: #111;
}
.status button {
  flex: none;
  box-sizing: border-box;
  width: 22px;
  border-left: 1px solid #55575a;
  background: linear-gradient(#c9c9cb, #a6a6a9);
  white-space: nowrap;
}
.status button.on { background: linear-gradient(#e4f6fb, #a3dcec); }
.coords { flex: none; width: 184px; padding-left: 10px; line-height: 23px; color: #a3a4a8; }
.fill { flex: 1; border-left: 1px solid #55575a; }
.gap { width: 12px; box-sizing: border-box; border-left: 1px solid #55575a; }
.gap.narrow { width: 6px; }
.gap.tiny { width: 4px; }
.status .space { width: 40px; }
.status .ratio { width: 51px; gap: 3px; }
.status .workspace { width: 150px; gap: 3px; }
.status .tray { width: 11px; }
</style>
